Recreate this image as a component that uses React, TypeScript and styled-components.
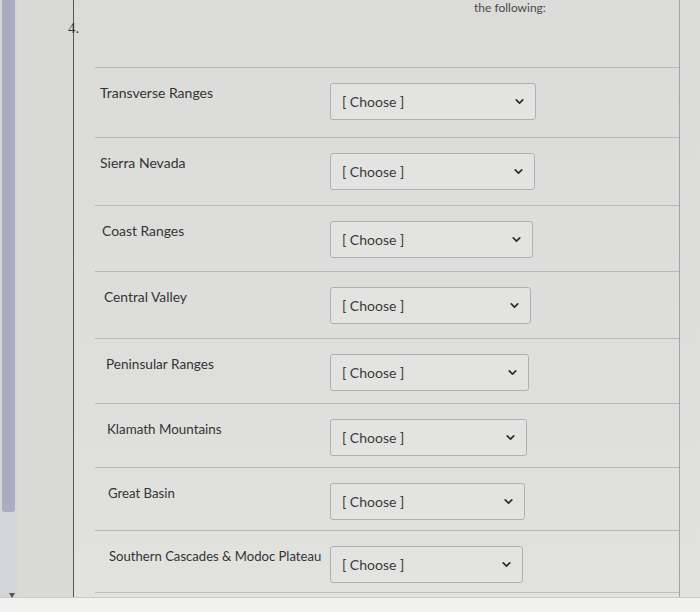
import React from "react";
import styled, { createGlobalStyle } from "styled-components";
import { ChevronDown } from "lucide-react";

const GlobalStyle = createGlobalStyle`
  html, body {
    margin: 0;
    padding: 0;
    background: #dcdcda;
  }
  body {
    font-family: Lato, "Open Sans", sans-serif;
    color: #333;
  }
`;

const Page = styled.div`
  width: 700px;
  height: 612px;
  display: flex;
  flex-direction: column;
  overflow: hidden;
  background: linear-gradient(180deg, #dbdbd9 0%, #dedfdc 60%, #e2e2df 100%);
`;

const Main = styled.div`
  flex: 1;
  display: flex;
  min-height: 0;
`;

const ScrollTrack = styled.div`
  width: 17px;
  background: #d4d5d6;
  padding: 0 2px;
  box-sizing: border-box;
`;

const ScrollThumb = styled.div`
  width: 13px;
  height: 512px;
  background: #a9adbf;
  border-radius: 0 0 3px 3px;
`;

const Gutter = styled.div`
  width: 56px;
  background: #d9d9d8;
`;

const Panel = styled.div`
  width: 605px;
  border-left: 1px solid #55575a;
  border-right: 1px solid #a2a4a6;
  display: flex;
  flex-direction: column;
`;

const Header = styled.div`
  height: 67px;
  display: flex;
  flex-direction: column;
`;

const Prompt = styled.div`
  margin: 1px 0 0 400px;
  font-size: 12px;
  color: #4a4a4a;
  line-height: 14px;
`;

const Number = styled.div`
  margin: 5px 0 0 -6px;
  font-family: "Liberation Serif", serif;
  font-size: 15px;
  color: #333;
`;

const List = styled.div`
  margin-left: 21px;
  border-bottom: 1px solid #bcbfc1;
`;

const Row = styled.div<{ $h: number; $indent: number }>`
  height: ${(p) => p.$h}px;
  box-sizing: border-box;
  border-top: 1px solid #b6b9bc;
  display: flex;
  align-items: flex-start;
  padding-top: 15px;
  padding-left: ${(p) => p.$indent}px;
`;

const Label = styled.div<{ $indent: number; $size: number }>`
  font-size: ${(p) => p.$size}px;
  line-height: 20px;
  color: #343434;
  width: ${(p) => 235 - p.$indent}px;
  white-space: nowrap;
`;

const Select = styled.div<{ $w: number }>`
  width: ${(p) => p.$w}px;
  height: 37px;
  box-sizing: border-box;
  border: 1px solid #aeb1b4;
  border-radius: 3px;
  background: #e3e4e2;
  display: flex;
  align-items: center;
  justify-content: space-between;
  padding: 0 9px 0 11px;
  font-size: 14px;
  color: #3a3a3a;
`;

const BottomBar = styled.div`
  height: 14px;
  background: #f1f1f0;
  border-top: 1px solid #c9c9cb;
  display: flex;
  align-items: flex-start;
`;

const DownArrow = styled.div`
  margin: -5px 0 0 9px;
  width: 0;
  height: 0;
  border-left: 3px solid transparent;
  border-right: 3px solid transparent;
  border-top: 5px solid #555;
`;

const rows = [
  { label: "Transverse Ranges", h: 70, indent: 5, w: 206, size: 14 },
  { label: "Sierra Nevada", h: 68, indent: 5, w: 205, size: 14 },
  { label: "Coast Ranges", h: 66, indent: 7, w: 203, size: 13.9 },
  { label: "Central Valley", h: 67, indent: 9, w: 201, size: 13.8 },
  { label: "Peninsular Ranges", h: 65, indent: 11, w: 199, size: 13.6 },
  { label: "Klamath Mountains", h: 64, indent: 12, w: 197, size: 13.4 },
  { label: "Great Basin", h: 63, indent: 13, w: 195, size: 13.2 },
  { label: "Southern Cascades & Modoc Plateau", h: 62, indent: 14, w: 193, size: 13.1 },
];

export default function App() {
  return (
    <>
      <GlobalStyle />
      <Page>
        <Main>
          <ScrollTrack>
            <ScrollThumb />
          </ScrollTrack>
          <Gutter />
          <Panel>
            <Header>
              <Prompt>the following:</Prompt>
              <Number>4.</Number>
            </Header>
            <List>
              {rows.map((r) => (
                <Row key={r.label} $h={r.h} $indent={r.indent}>
                  <Label $indent={r.indent} $size={r.size}>
                    {r.label}
                  </Label>
                  <Select $w={r.w}>
                    <span>[ Choose ]</span>
                    <ChevronDown size={13} strokeWidth={3.2} color="#2e2e2e" />
                  </Select>
                </Row>
              ))}
            </List>
          </Panel>
        </Main>
        <BottomBar>
          <DownArrow />
        </BottomBar>
      </Page>
    </>
  );
}
